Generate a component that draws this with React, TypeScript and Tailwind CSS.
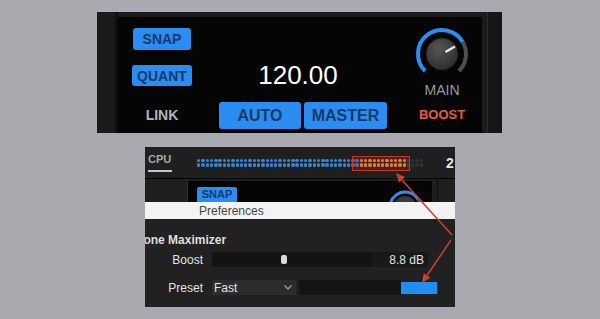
import React from "react";

const Knob = () => (
  <svg width="56" height="56" viewBox="0 0 56 56">
    <defs>
      <radialGradient id="kg" cx="40%" cy="35%" r="70%">
        <stop offset="0%" stopColor="#555" />
        <stop offset="100%" stopColor="#2c2c2c" />
      </radialGradient>
    </defs>
    <path d="M 11.03 44.97 A 24 24 0 1 1 48.78 16" fill="none" stroke="#2a8df2" strokeWidth="4" />
    <path d="M 48.78 16 A 24 24 0 0 1 44.97 44.97" fill="none" stroke="#4e4e4e" strokeWidth="4" />
    <circle cx="28" cy="28" r="16" fill="url(#kg)" stroke="#1e1e1e" strokeWidth="1" />
    <line x1="32.3" y1="25.5" x2="40.1" y2="21" stroke="#e8e8e8" strokeWidth="2.5" strokeLinecap="round" />
  </svg>
);

const SmallKnob = () => (
  <svg width="34" height="34" viewBox="0 0 34 34">
    <path d="M 6.4 27.6 A 15 15 0 1 1 30 9.5" fill="none" stroke="#2a8df2" strokeWidth="3" />
    <path d="M 30 9.5 A 15 15 0 0 1 27.6 27.6" fill="none" stroke="#4e4e4e" strokeWidth="3" />
    <circle cx="17" cy="17" r="11" fill="#3a3a3a" />
  </svg>
);

const cols = Array.from({ length: 53 }, (_, i) => i);

export default function App() {
  return (
    <div className="relative w-[600px] h-[319px] bg-[#a9a9b0] overflow-hidden pt-[12px] font-['Liberation_Sans',Arial,sans-serif]">
      {/* DECK PANEL */}
      <div className="ml-[97px] w-[405px] h-[121px] bg-[#1b1b1b] flex">
        <div className="w-[18px]" />
        <div className="w-[3px] bg-[#0e0e0e]" />
        <div className="w-[364px] mt-[5px] bg-[#050505] flex pl-[14px]">
          <div className="w-[60px] flex flex-col items-center">
            <div className="mt-[11px] w-[58px] h-[22px] rounded-[3px] bg-[#2b8cf2] text-[#183a68] text-[14px] font-bold leading-none flex items-center justify-center">
              SNAP
            </div>
            <div className="mt-[15px] w-[60px] h-[21px] rounded-[3px] bg-[#2b8cf2] text-[#183a68] text-[14px] font-bold leading-none flex items-center justify-center">
              QUANT
            </div>
            <div className="mt-[21px] text-[14px] leading-[16px] font-bold text-[#b4b4b4]">LINK</div>
          </div>

          <div className="ml-[27px] w-[168px] flex flex-col items-center">
            <div className="mt-[43px] mr-[10px] text-[26px] leading-[30px] text-white">120.00</div>
            <div className="mt-[12px] flex gap-[3px]">
              <div className="w-[82px] h-[27px] rounded-[3px] bg-[#2b8cf2] text-[#183a68] text-[16px] font-bold flex items-center justify-center">
                AUTO
              </div>
              <div className="w-[83px] h-[27px] rounded-[3px] bg-[#2b8cf2] text-[#183a68] text-[16px] font-bold flex items-center justify-center">
                MASTER
              </div>
            </div>
          </div>

          <div className="ml-[25px] w-[60px] flex flex-col items-center">
            <div className="mt-[9px]">
              <Knob />
            </div>
            <div className="text-[14px] leading-[16px] text-[#9a9a9a]">MAIN</div>
            <div className="mt-[9px] text-[13px] leading-[16px] font-bold text-[#e85a3a]">BOOST</div>
          </div>
        </div>
        <div className="w-[5px]" />
        <div className="w-[1px] bg-[#2c2c2c]" />
        <div className="flex-1 bg-[#161616]" />
      </div>

      {/* PREFERENCES PANEL */}
      <div className="mt-[14px] ml-[145px] w-[310px] h-[160px] bg-[#1f1f1f] flex flex-col overflow-hidden">
        <div className="h-[32px] shrink-0 flex items-start border-b border-black">
          <div className="pl-[3px] flex flex-col">
            <div className="mt-[6px] text-[11px] leading-[13px] font-bold text-[#a8a8a8]">CPU</div>
            <div className="mt-[4px] w-[24px] h-[2px] bg-[#c4c4c4]" />
          </div>
          <div className="ml-[25px] mt-[11.5px] flex flex-col gap-[1.6px]">
            {[0, 1].map((r) => (
              <div key={r} className="flex gap-[0.9px]">
                {cols.map((c) => (
                  <div
                    key={c}
                    className={`w-[3.4px] h-[3.4px] rounded-full ${
                      c < 38 ? "bg-[#2f88e6]" : c < 49 ? "bg-[#f2a324]" : "bg-[#333333]"
                    }`}
                  />
                ))}
              </div>
            ))}
          </div>
          <div className="ml-[23px] mt-[8px] shrink-0 text-[14px] leading-[16px] font-bold text-[#e6e6e6]">
            2
          </div>
        </div>

        <div className="h-[23px] shrink-0 flex overflow-hidden">
          <div className="w-[42px]" />
          <div className="w-[1px] bg-[#2e2e2e]" />
          <div className="w-[244px] mt-[2px] bg-[#050505] flex items-start pl-[9px]">
            <div className="mt-[6px] w-[40px] h-[17px] rounded-[2px] bg-[#2b8cf2] text-[#183a68] text-[11px] font-bold flex justify-center pt-[2px] leading-none">
              SNAP
            </div>
            <div className="ml-[151px] mt-[9px] shrink-0">
              <SmallKnob />
            </div>
          </div>
          <div className="w-[5px]" />
          <div className="w-[1px] bg-[#0c0c0c]" />
          <div className="flex-1" />
        </div>

        <div className="h-[17px] shrink-0 bg-[#f3f3f3] flex items-center pl-[54px] text-[12px] text-[#454545]">
          Preferences
        </div>

        <div className="flex-1 bg-[#212121] flex flex-col">
          <div className="mt-[14px] -ml-[8px] text-[12px] leading-[14px] font-bold text-[#dedede] whitespace-nowrap">
            Tone Maximizer
          </div>
          <div className="mt-[5px] h-[15px] flex items-center">
            <div className="w-[58px] text-right text-[12px] text-[#e2e2e2]">Boost</div>
            <div className="ml-[9px] w-[160px] h-full bg-[#131313] flex items-center">
              <div className="ml-[69px] w-[6px] h-[9px] rounded-[2px] bg-[#d9d9d9]" />
            </div>
            <div className="w-[56px] h-full bg-[#181818] flex items-center justify-end pr-[4px] text-[12px] text-[#e2e2e2]">
              8.8 dB
            </div>
          </div>
          <div className="mt-[13px] h-[15px] flex items-center">
            <div className="w-[58px] text-right text-[12px] text-[#e2e2e2]">Preset</div>
            <div className="ml-[9px] w-[84px] h-full bg-[#2c2c2c] flex items-center justify-between pl-[2px] pr-[4px] text-[12px] text-[#e2e2e2]">
              <span>Fast</span>
              <svg width="8" height="5" viewBox="0 0 8 5">
                <path d="M0.5 0.5 L4 4 L7.5 0.5" fill="none" stroke="#9a9a9a" strokeWidth="1.3" />
              </svg>
            </div>
            <div className="ml-[3px] w-[102px] h-full bg-[#141414]" />
            <div className="w-[36px] h-[12px] bg-[#1f8ff5]" />
          </div>
        </div>
      </div>

      {/* ANNOTATIONS */}
      <svg className="absolute inset-0 pointer-events-none" width="600" height="319" viewBox="0 0 600 319">
        <rect x="352.5" y="156.5" width="57" height="14" fill="rgba(200,40,30,0.25)" stroke="#cc3228" strokeWidth="1" />
        <line x1="452" y1="235" x2="402" y2="180" stroke="#cf3f2a" strokeWidth="1.5" />
        <polygon points="396,173 405,177 399,182.4" fill="#cf3f2a" />
        <line x1="451" y1="240" x2="427" y2="275.5" stroke="#cf3f2a" strokeWidth="1.5" />
        <polygon points="422,283 430.3,277.7 423.7,273.3" fill="#cf3f2a" />
      </svg>
    </div>
  );
}
